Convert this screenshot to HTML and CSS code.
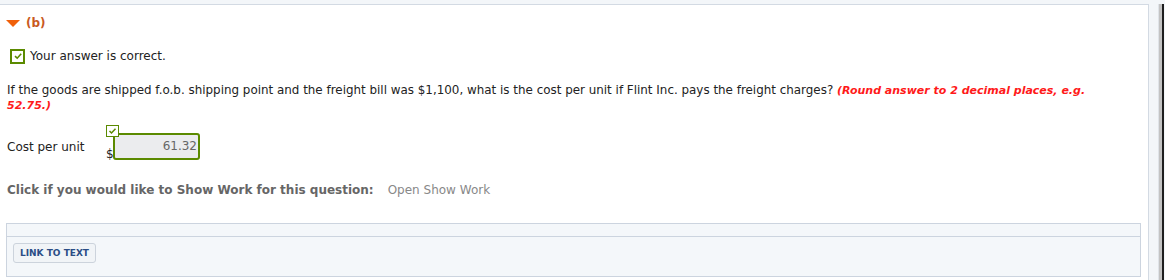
FILE: index.html
```html
<!DOCTYPE html>
<html>
<head>
<meta charset="utf-8">
<link rel="stylesheet" href="styles.css">
</head>
<body>
<div class="page">
  <div class="panel">
    <div class="part-head">
      <span class="tri"></span>
      <span class="part-label">(b)</span>
    </div>
    <div class="correct">
      <span class="chk"><svg width="10" height="10" viewBox="0 0 10 10"><path d="M2 5.2 L4.2 7.2 L8.2 2.8" fill="none" stroke="#5b8a00" stroke-width="1.6"/></svg></span>
      <span>Your answer is correct.</span>
    </div>
    <p class="question">If the goods are shipped f.o.b. shipping point and the freight bill was $1,100, what is the cost per unit if Flint Inc. pays the freight charges? <em class="hint">(Round answer to 2 decimal places, e.g. 52.75.)</em></p>
    <div class="answer-row">
      <span class="ans-label">Cost per unit</span>
      <div class="field">
        <span class="dollar">$</span>
        <span class="small-chk"><svg width="9" height="8" viewBox="0 0 9 8"><path d="M1.5 4 L3.5 6 L7.5 1.8" fill="none" stroke="#5b8a00" stroke-width="1.5"/></svg></span>
        <span class="input">61.32</span>
      </div>
    </div>
    <div class="show-work">
      <span class="sw-label">Click if you would like to Show Work for this question:</span>
      <span class="sw-link">Open Show Work</span>
    </div>
    <div class="links">
      <div class="links-head"></div>
      <div class="links-body">
        <span class="btn">LINK TO TEXT</span>
      </div>
    </div>
  </div>
  <div class="gutter"></div>
  <div class="sb-gray"></div>
  <div class="sb-dark"></div>
</div>
</body>
</html>
```
FILE: styles.css
```css
html, body {
  margin: 0;
  padding: 0;
  background: #f3f6f9;
  height: 280px;
  overflow: hidden;
}
body {
  font-family: "DejaVu Sans", sans-serif;
  color: #222;
}
.page {
  display: flex;
  height: 280px;
  padding-top: 4px;
  box-sizing: border-box;
}
.panel {
  width: 1149px;
  box-sizing: border-box;
  background: #fff;
  border-top: 1px solid #d3dae3;
  border-right: 1px solid #d3dae3;
  padding: 0 0 0 7px;
}
.gutter {
  width: 9px;
  border-right: 1px solid #dfe3e8;
}
.sb-gray {
  width: 3px;
  background: #c3c3c3;
}
.sb-dark {
  width: 2px;
  background: #1e1e1e;
}
.part-head {
  display: flex;
  align-items: center;
  height: 14px;
  margin-top: 11px;
  gap: 6px;
}
.tri {
  width: 0;
  height: 0;
  border-left: 7px solid transparent;
  border-right: 7px solid transparent;
  border-top: 7px solid #f0600a;
  margin-left: -1px;
}
.part-label {
  font-weight: bold;
  font-size: 12px;
  color: #c95a1f;
}
.correct {
  display: flex;
  align-items: center;
  gap: 5px;
  margin-top: 18px;
  margin-left: 3px;
  font-size: 12px;
  height: 16px;
}
.chk {
  width: 11px;
  height: 11px;
  border: 2px solid #5b8a00;
  display: flex;
  align-items: center;
  justify-content: center;
  background: #fff;
}
.question {
  margin: 19px 0 0 0;
  font-size: 11.92px;
  line-height: 14px;
  padding-right: 20px;
}
.hint {
  font-weight: bold;
  font-style: italic;
  font-size: 11px;
  color: #ff1a1a;
}
.answer-row {
  display: flex;
  align-items: flex-start;
  margin-top: 12px;
  height: 36px;
}
.ans-label {
  font-size: 12px;
  width: 99px;
  margin-top: 15px;
}
.field {
  position: relative;
  padding-left: 7px;
  padding-top: 8px;
}
.dollar {
  position: absolute;
  left: 0;
  bottom: -1px;
  font-size: 12px;
}
.small-chk {
  position: absolute;
  left: 0;
  top: 0;
  width: 11px;
  height: 10px;
  border: 1px solid #5b8a00;
  background: #fff;
  display: flex;
  align-items: center;
  justify-content: center;
  z-index: 2;
}
.input {
  display: block;
  width: 82px;
  height: 23px;
  line-height: 23px;
  border: 2px solid #5b8a00;
  border-radius: 3px;
  background: #ebecee;
  text-align: right;
  font-size: 12px;
  color: #666;
  padding-right: 1px;
}
.show-work {
  margin-top: 22px;
  display: flex;
  gap: 14px;
  font-size: 12px;
}
.sw-label {
  font-weight: bold;
  color: #666;
}
.sw-link {
  font-size: 12px;
  color: #888;
}
.links {
  margin-top: 26px;
  width: 1133px;
  margin-left: -1px;
  border: 1px solid #ccd4df;
  background: #f4f7fa;
}
.links-head {
  height: 12px;
  border-bottom: 1px solid #ccd4df;
}
.links-body {
  height: 39px;
  padding: 6px 0 0 6px;
  box-sizing: border-box;
  display: flex;
  align-items: flex-start;
}
.btn {
  display: block;
  border: 1px solid #ccd3dc;
  border-radius: 3px;
  background: #f1f4f7;
  padding: 4px 6px 3px;
  font-weight: bold;
  font-size: 9px;
  color: #2b4d86;
  line-height: 11px;
}
```
